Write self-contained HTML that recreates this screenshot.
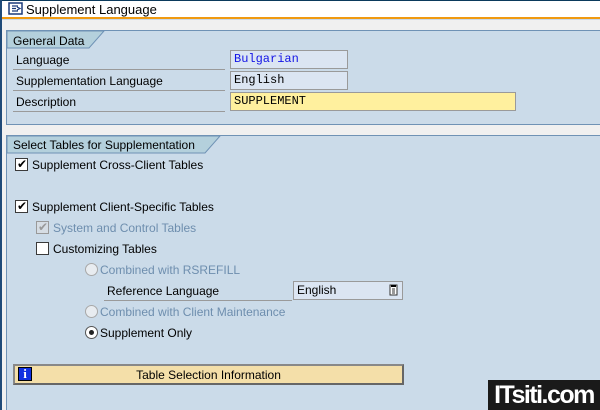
<!DOCTYPE html>
<html><head><style>
*{margin:0;padding:0;box-sizing:border-box}
body{width:600px;height:410px;position:relative;overflow:hidden;background:#f0f0f0;font-family:"Liberation Sans",sans-serif;font-size:12px;color:#000}
.a{position:absolute}
.lbl{position:absolute;left:10px;height:20px;line-height:21px;border-bottom:1px solid #9a9a9a}
.inp{position:absolute;height:19px;border:1px solid #9a9a9a;background:#dbe5f2;font-family:"Liberation Mono",monospace;font-size:12px;line-height:17px;padding-left:3px}
.cb{position:absolute;width:13px;height:13px;border:1px solid #3a3a3a;background:#fff}
.rd{position:absolute;width:13px;height:13px;border:1px solid #a8a8a8;border-radius:50%;background:#e8ecf0}
.t{position:absolute;white-space:nowrap;line-height:14px}
.g{color:#6e8eae}
</style></head><body>
<div class="a" style="left:0;top:0;width:600px;height:1px;background:#0b3a5c"></div>
<div class="a" style="left:0;top:1px;width:600px;height:16px;background:#fff"></div>
<div class="a" style="left:0;top:17px;width:600px;height:2px;background:#f09a10"></div>
<div class="a" style="left:0;top:19px;width:600px;height:1px;background:#c8d8e8"></div>
<div class="a" style="left:0;top:0;width:2px;height:410px;background:#1f4a78"></div>
<svg class="a" style="left:8px;top:2px" width="15" height="13"><rect x="1" y="1" width="13" height="11" fill="#fff" stroke="#1a3a7a" stroke-width="1.5"/><path d="M4 4h6M4 6.5h4M4 9h6M9 5l3 1.5-3 1.5" stroke="#1a3a7a" stroke-width="1.2" fill="none"/></svg>
<div class="t" style="left:26px;top:3px;font-size:13px">Supplement Language</div>

<div class="a" style="left:6px;top:30px;width:594px;height:95px;background:#cbdbe9;border-top:1px solid #6f92b5;border-left:1px solid #6f92b5;border-bottom:1px solid #6f92b5"></div>
<svg class="a" style="left:7px;top:31px" width="100" height="18"><path d="M0 0H97L82 17H0Z" fill="#b4d0dc" stroke="#6f92b5"/></svg>
<div class="t" style="left:13px;top:34px">General Data</div>
<div class="lbl" style="left:13px;top:50px;width:212px;padding-left:3px">Language</div>
<div class="lbl" style="left:13px;top:71px;width:212px;padding-left:3px">Supplementation Language</div>
<div class="lbl" style="left:13px;top:92px;width:212px;padding-left:3px">Description</div>
<div class="inp" style="left:230px;top:50px;width:118px;color:#1414e6">Bulgarian</div>
<div class="inp" style="left:230px;top:71px;width:118px">English</div>
<div class="inp" style="left:230px;top:92px;width:286px;background:#fff09e">SUPPLEMENT</div>

<div class="a" style="left:6px;top:135px;width:594px;height:275px;background:#cbdbe9;border-top:1px solid #6f92b5;border-left:1px solid #6f92b5"></div>
<svg class="a" style="left:7px;top:136px" width="220" height="18"><path d="M0 0H213L198 17H0Z" fill="#b4d0dc" stroke="#6f92b5"/></svg>
<div class="t" style="left:13px;top:138px">Select Tables for Supplementation</div>

<div class="cb" style="left:15px;top:158px"></div><div class="t" style="left:17px;top:157px;font-size:12px">✔</div>
<div class="t" style="left:32px;top:158px">Supplement Cross-Client Tables</div>
<div class="cb" style="left:15px;top:200px"></div><div class="t" style="left:17px;top:199px">✔</div>
<div class="t" style="left:32px;top:200px">Supplement Client-Specific Tables</div>
<div class="cb" style="left:36px;top:221px;border-color:#999;background:#d6dde4"></div><div class="t" style="left:38px;top:220px;color:#999">✔</div>
<div class="t g" style="left:53px;top:221px">System and Control Tables</div>
<div class="cb" style="left:36px;top:242px"></div>
<div class="t" style="left:53px;top:242px">Customizing Tables</div>

<div class="rd" style="left:85px;top:263px"></div>
<div class="t g" style="left:100px;top:263px">Combined with RSREFILL</div>
<div class="lbl" style="left:104px;top:281px;width:188px;padding-left:3px">Reference Language</div>
<div class="inp" style="left:293px;top:281px;width:110px;background:#dbe5f2;font-family:'Liberation Sans',sans-serif;padding-left:3px">English</div>
<svg class="a" style="left:389px;top:284px" width="9" height="12"><rect x="1" y="1" width="7" height="10" fill="#fff" stroke="#333"/><path d="M2 1h5v2H2z" fill="#000"/><path d="M3 5h3M3 7h3M3 9h3" stroke="#333"/></svg>
<div class="rd" style="left:85px;top:305px"></div>
<div class="t g" style="left:100px;top:305px">Combined with Client Maintenance</div>
<div class="rd" style="left:85px;top:326px;border-color:#555;background:#fff"></div>
<div class="a" style="left:89px;top:330px;width:5px;height:5px;border-radius:50%;background:#222"></div>
<div class="t" style="left:100px;top:326px">Supplement Only</div>

<div class="a" style="left:13px;top:364px;width:391px;height:21px;background:#f4dfa9;border:2px solid #666;border-top-color:#888;border-left-color:#888"></div>
<div class="a" style="left:18px;top:367px;width:14px;height:14px;background:#1030e0;border:1px solid #000;color:#fff;font-family:'Liberation Serif',serif;font-weight:bold;font-size:13px;line-height:12px;text-align:center">i</div>
<div class="t" style="left:13px;top:368px;width:391px;text-align:center">Table Selection Information</div>

<div class="a" style="left:488px;top:380px;width:112px;height:30px;background:#1a1a1a;color:#fff;font-weight:bold;font-size:25px;line-height:30px;text-align:center;letter-spacing:-1.5px;font-family:'Liberation Sans Narrow','Liberation Sans',sans-serif">ITsiti.com</div>
</body></html>
